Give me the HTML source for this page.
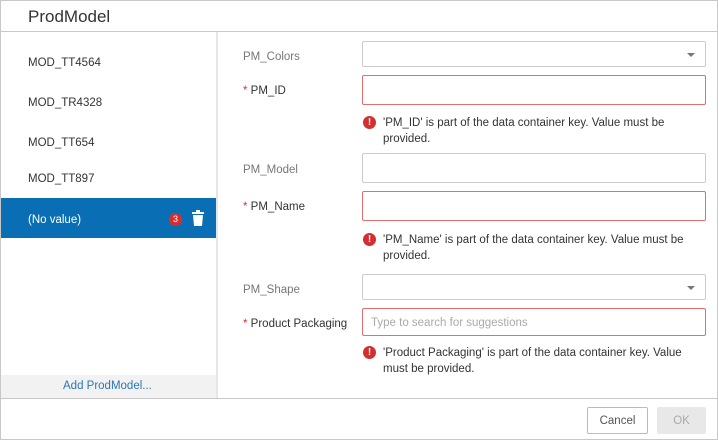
<!DOCTYPE html>
<html><head><style>
*{box-sizing:border-box;margin:0;padding:0}
body{width:718px;height:440px;background:#fff;font-family:"Liberation Sans",sans-serif;font-size:11.5px;color:#333;position:relative;overflow:hidden}
.frame{position:absolute;left:0;top:0;width:718px;height:440px;border:1px solid #c8c8c8}
.abs{position:absolute}
.title{left:28px;top:7px;font-size:17px;color:#333}
.hline{height:1px;background:#c8c8c8;left:1px;right:1px}
.item{left:28px;font-size:11.5px;color:#333}
.inp{position:absolute;left:362px;width:344px;border:1px solid #ccc;border-radius:2px;background:#fff}
.err{border-color:#e07070}
.lbl{position:absolute;left:243px;color:#777}
.req{color:#333}
.req:before{content:"* ";color:#d33}
.msg{position:absolute;left:383px;width:320px;line-height:16px;color:#333}
.ic{position:absolute;left:-20px;top:1px;width:13px;height:13px;border-radius:50%;background:#d32f2f;color:#fff;font-size:10px;font-weight:bold;text-align:center;line-height:13px}
.caret{position:absolute;right:10px;top:11px;border-left:4px solid transparent;border-right:4px solid transparent;border-top:4px solid #777}
</style></head><body>
<div class="frame"></div>
<div class="abs title">ProdModel</div>
<div class="abs hline" style="top:31px"></div>
<div class="abs" style="left:216px;top:32px;width:2px;height:366px;background:#e6e6e6"></div>
<div class="abs item" style="top:57px">MOD_TT4564</div>
<div class="abs item" style="top:97px">MOD_TR4328</div>
<div class="abs item" style="top:137px">MOD_TT654</div>
<div class="abs item" style="top:173px">MOD_TT897</div>
<div class="abs" style="left:1px;top:198px;width:215px;height:40px;background:#0a6eb4"></div>
<div class="abs item" style="top:214px;color:#fff">(No value)</div>
<div class="abs" style="left:169px;top:213px;width:13px;height:13px;border-radius:50%;background:#d32f2f;color:#fff;font-size:9px;text-align:center;line-height:13px">3</div>
<svg class="abs" style="left:192px;top:210px" width="12" height="16" viewBox="0 0 12 16"><rect x="0" y="2" width="12" height="2" fill="#fff"/><rect x="4" y="0" width="4" height="2" fill="#fff"/><path d="M1 5h10l-1 11H2z" fill="#fff"/></svg>
<div class="abs" style="left:1px;top:375px;width:215px;height:23px;background:#f2f2f2"></div>
<div class="abs" style="left:63px;top:380px;color:#2a76b8">Add ProdModel...</div>
<div class="abs hline" style="top:398px"></div>

<div class="lbl" style="top:51px">PM_Colors</div>
<div class="inp" style="top:41px;height:26px"><div class="caret"></div></div>
<div class="lbl req" style="top:85px">PM_ID</div>
<div class="inp err" style="top:75px;height:30px"></div>
<div class="msg" style="top:115px"><span class="ic">!</span>'PM_ID' is part of the data container key. Value must be provided.</div>
<div class="lbl" style="top:164px">PM_Model</div>
<div class="inp" style="top:153px;height:30px"></div>
<div class="lbl req" style="top:201px">PM_Name</div>
<div class="inp err" style="top:191px;height:30px"></div>
<div class="msg" style="top:232px"><span class="ic">!</span>'PM_Name' is part of the data container key. Value must be provided.</div>
<div class="lbl" style="top:284px">PM_Shape</div>
<div class="inp" style="top:274px;height:26px"><div class="caret"></div></div>
<div class="lbl req" style="top:318px">Product Packaging</div>
<div class="inp err" style="top:308px;height:28px;color:#aaa;padding:8px 0 0 8px">Type to search for suggestions</div>
<div class="msg" style="top:345px"><span class="ic">!</span>'Product Packaging' is part of the data container key. Value must be provided.</div>

<div class="abs" style="left:587px;top:407px;width:61px;height:27px;border:1px solid #bbb;border-radius:2px;text-align:center;line-height:27px;color:#555">Cancel</div>
<div class="abs" style="left:657px;top:407px;width:49px;height:27px;background:#e8e8e8;border-radius:2px;text-align:center;line-height:29px;color:#aaa">OK</div>
</body></html>
